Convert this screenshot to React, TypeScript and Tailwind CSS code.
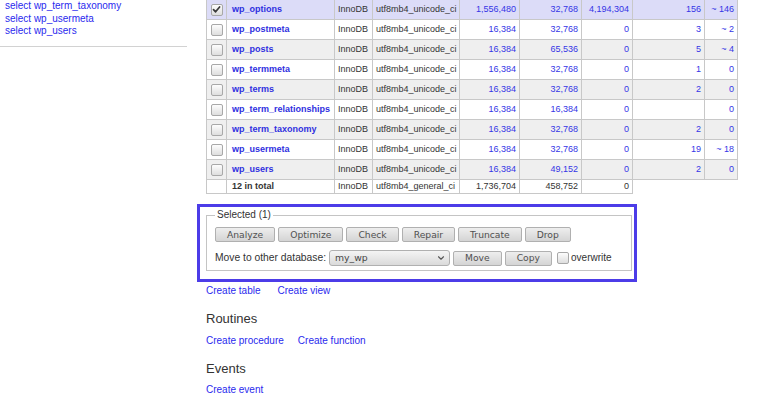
import { ChevronDown } from "lucide-react";

type Row = {
  name: string;
  data: string;
  index: string;
  free: string;
  rows: string;
  est: string;
  checked?: boolean;
};

const tables: Row[] = [
  { name: "wp_options", data: "1,556,480", index: "32,768", free: "4,194,304", rows: "156", est: "~ 146", checked: true },
  { name: "wp_postmeta", data: "16,384", index: "32,768", free: "0", rows: "3", est: "~ 2" },
  { name: "wp_posts", data: "16,384", index: "65,536", free: "0", rows: "5", est: "~ 4" },
  { name: "wp_termmeta", data: "16,384", index: "32,768", free: "0", rows: "1", est: "0" },
  { name: "wp_terms", data: "16,384", index: "32,768", free: "0", rows: "2", est: "0" },
  { name: "wp_term_relationships", data: "16,384", index: "16,384", free: "0", rows: "", est: "0" },
  { name: "wp_term_taxonomy", data: "16,384", index: "32,768", free: "0", rows: "2", est: "0" },
  { name: "wp_usermeta", data: "16,384", index: "32,768", free: "0", rows: "19", est: "~ 18" },
  { name: "wp_users", data: "16,384", index: "49,152", free: "0", rows: "2", est: "0" },
];

const cell = "border border-[#c8c8c8] px-[3px] whitespace-nowrap";

function CheckBox({ checked = false }: { checked?: boolean }) {
  return (
    <span className="inline-flex h-[12px] w-[12px] items-center justify-center rounded-[2px] border border-[#a8a8a8] bg-linear-to-b from-[#fdfdfd] to-[#dedede] align-middle">
      {checked && (
        <svg width="9" height="9" viewBox="0 0 9 9" fill="none">
          <path d="M1.5 4.6 L3.6 6.8 L7.6 2" stroke="#3a3a3a" strokeWidth="1.7" strokeLinecap="round" strokeLinejoin="round" />
        </svg>
      )}
    </span>
  );
}

function Btn({ children }: { children: React.ReactNode }) {
  return (
    <button className="h-[15px] rounded-[2px] border border-[#b0b0b0] bg-linear-to-b from-[#eeeeee] to-[#d4d4d4] px-[11px] font-['DejaVu_Sans',sans-serif] text-[9.2px] leading-none text-[#505050]">
      {children}
    </button>
  );
}

export default function App() {
  return (
    <div className="flex min-h-[400px] bg-white font-['Liberation_Sans',Arial,sans-serif] text-[#333]">
      {/* Left navigation */}
      <aside className="w-[187px] shrink-0">
        <ul className="pl-[5px] text-[10px] leading-[12.5px] text-[#2a2aee]">
          <li>select wp_term_taxonomy</li>
          <li>select wp_usermeta</li>
          <li>select wp_users</li>
        </ul>
        <div className="mt-[8px] border-t border-[#d2d2d2]" />
      </aside>

      {/* Main content */}
      <main className="flex flex-1 flex-col items-start pl-[10px]">
        <table className="-mt-px ml-[9px] w-[531px] table-fixed border-collapse text-[9px] leading-[11px]">
          <colgroup>
            <col className="w-[20px]" />
            <col className="w-[108px]" />
            <col className="w-[38px]" />
            <col className="w-[87px]" />
            <col className="w-[60px]" />
            <col className="w-[62px]" />
            <col className="w-[51px]" />
            <col className="w-[72px]" />
            <col className="w-[33px]" />
          </colgroup>
          <tbody>
            {tables.map((t, i) => (
              <tr
                key={t.name}
                className={`h-[20px] ${t.checked ? "bg-[#dcdcf8]" : i % 2 === 0 ? "bg-[#efefef]" : "bg-white"}`}
              >
                <td className={`${cell} text-center`}>
                  <CheckBox checked={t.checked} />
                </td>
                <td className={`${cell} pl-[5px] font-bold text-[#2f2fe0]`}>{t.name}</td>
                <td className={cell}>InnoDB</td>
                <td className={cell}>utf8mb4_unicode_ci</td>
                <td className={`${cell} text-right text-[#3535e6]`}>{t.data}</td>
                <td className={`${cell} text-right text-[#3535e6]`}>{t.index}</td>
                <td className={`${cell} text-right text-[#3535e6]`}>{t.free}</td>
                <td className={`${cell} text-right text-[#3535e6]`}>{t.rows}</td>
                <td className={`${cell} text-right text-[#3535e6]`}>{t.est}</td>
              </tr>
            ))}
            <tr className="h-[14px] bg-white">
              <td className={cell}></td>
              <td className={`${cell} pl-[5px] font-bold`}>12 in total</td>
              <td className={cell}>InnoDB</td>
              <td className={cell}>utf8mb4_general_ci</td>
              <td className={`${cell} text-right`}>1,736,704</td>
              <td className={`${cell} text-right`}>458,752</td>
              <td className={`${cell} text-right`}>0</td>
            </tr>
          </tbody>
        </table>

        {/* Selected actions, highlighted */}
        <div className="mt-[10px] w-[440px] border-[3px] border-[#4c3ce8] pb-[8px] pl-[6px] pt-[2px]">
          <fieldset className="w-[426px] border border-[#c4c4c4] px-[8px] pb-[4px] pt-[6px]">
            <legend className="px-[2px] text-[10px] leading-[12px] text-[#333]">Selected (1)</legend>
            <div className="flex gap-[3px]">
              <Btn>Analyze</Btn>
              <Btn>Optimize</Btn>
              <Btn>Check</Btn>
              <Btn>Repair</Btn>
              <Btn>Truncate</Btn>
              <Btn>Drop</Btn>
            </div>
            <div className="mt-[8px] flex items-center">
              <span className="mr-[3px] text-[10.3px] leading-[16px] text-[#333]">Move to other database:</span>
              <div className="mr-[3px] flex h-[16px] w-[121px] items-center justify-between rounded-[3px] border border-[#b0b0b0] bg-linear-to-b from-[#f4f4f4] to-[#dadada] pl-[5px] pr-[3px] font-['DejaVu_Sans',sans-serif] text-[9.3px] text-[#444]">
                <span>my_wp</span>
                <ChevronDown size={10} strokeWidth={2.6} className="text-[#555]" />
              </div>
              <div className="flex gap-[3px]">
                <Btn>Move</Btn>
                <Btn>Copy</Btn>
              </div>
              <span className="ml-[5px] mr-[2px] inline-flex">
                <CheckBox />
              </span>
              <span className="text-[10px] leading-[16px] text-[#333]">overwrite</span>
            </div>
          </fieldset>
        </div>

        <div className="ml-[9px] mt-[3px] flex gap-[17px] text-[10px] leading-[12px] text-[#2a2aee]">
          <span>Create table</span>
          <span>Create view</span>
        </div>

        <h2 className="ml-[9px] mt-[14px] text-[13px] leading-[15px] text-[#333]">Routines</h2>
        <div className="ml-[9px] mt-[9px] flex gap-[14px] text-[10px] leading-[12px] text-[#2a2aee]">
          <span>Create procedure</span>
          <span>Create function</span>
        </div>

        <h2 className="ml-[9px] mt-[14px] text-[13px] leading-[15px] text-[#333]">Events</h2>
        <div className="ml-[9px] mt-[8px] text-[10px] leading-[12px] text-[#2a2aee]">
          <span>Create event</span>
        </div>
      </main>
    </div>
  );
}
